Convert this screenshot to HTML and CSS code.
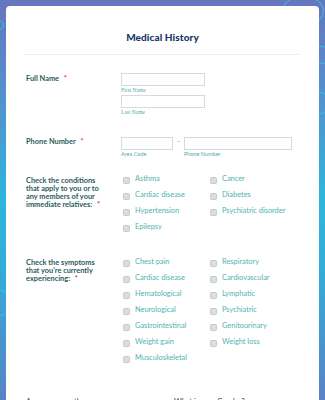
FILE: index.html
```html
<!DOCTYPE html>
<html>
<head>
<meta charset="utf-8">
<link rel="stylesheet" href="styles.css">
</head>
<body>
<div class="deco d1"></div>
<div class="deco d2"></div>
<div class="deco d3"></div>
<div class="deco d4"></div>
<div class="deco d5"></div>
<div class="card">
  <h1 class="title">Medical History</h1>
  <div class="divider"></div>

  <div class="row row-name">
    <div class="label">Full Name <span class="req">*</span></div>
    <div class="field">
      <div class="input name-input"></div>
      <div class="sub">First Name</div>
      <div class="input name-input"></div>
      <div class="sub">Last Name</div>
    </div>
  </div>

  <div class="row row-phone">
    <div class="label">Phone Number <span class="req">*</span></div>
    <div class="field phone">
      <div class="phone-part area">
        <div class="input"></div>
        <div class="sub">Area Code</div>
      </div>
      <div class="dash">-</div>
      <div class="phone-part num">
        <div class="input"></div>
        <div class="sub">Phone Number</div>
      </div>
    </div>
  </div>

  <div class="row row-cond">
    <div class="label multi">Check the conditions that apply to you or to any members of your immediate relatives: <span class="req">*</span></div>
    <div class="options">
      <div class="opt"><span class="cb"></span>Asthma</div>
      <div class="opt"><span class="cb"></span>Cancer</div>
      <div class="opt"><span class="cb"></span>Cardiac disease</div>
      <div class="opt"><span class="cb"></span>Diabetes</div>
      <div class="opt"><span class="cb"></span>Hypertension</div>
      <div class="opt"><span class="cb"></span>Psychiatric disorder</div>
      <div class="opt"><span class="cb"></span>Epilepsy</div>
    </div>
  </div>

  <div class="row row-symp">
    <div class="label multi">Check the symptoms that you're currently experiencing: <span class="req">*</span></div>
    <div class="options">
      <div class="opt"><span class="cb"></span>Chest pain</div>
      <div class="opt"><span class="cb"></span>Respiratory</div>
      <div class="opt"><span class="cb"></span>Cardiac disease</div>
      <div class="opt"><span class="cb"></span>Cardiovascular</div>
      <div class="opt"><span class="cb"></span>Hematological</div>
      <div class="opt"><span class="cb"></span>Lymphatic</div>
      <div class="opt"><span class="cb"></span>Neurological</div>
      <div class="opt"><span class="cb"></span>Psychiatric</div>
      <div class="opt"><span class="cb"></span>Gastrointestinal</div>
      <div class="opt"><span class="cb"></span>Genitourinary</div>
      <div class="opt"><span class="cb"></span>Weight gain</div>
      <div class="opt"><span class="cb"></span>Weight loss</div>
      <div class="opt"><span class="cb"></span>Musculoskeletal</div>
    </div>
  </div>

  <div class="row-bottom">
    <div class="label">Are you currently</div>
    <div class="label">What is your Gender?</div>
  </div>
</div>
</body>
</html>
```
FILE: styles.css
```css
html, body {
  margin: 0;
  padding: 0;
}
body {
  width: 325px;
  height: 400px;
  overflow: hidden;
  position: relative;
  background: linear-gradient(180deg, #6676bf 0%, #4f96cf 28%, #2cb6dd 50%, #33acd9 68%, #5a82c4 100%);
  font-family: Lato, "Open Sans", sans-serif;
}
.deco {
  position: absolute;
  border: 1.5px solid #33c3e0;
  border-radius: 50%;
}
.d1 { left: 282px; top: -4px; width: 40px; height: 28px; }
.d2 { left: 314px; top: 46px; width: 14px; height: 16px; }
.d3 { left: 313px; top: 92px; width: 14px; height: 20px; }
.d4 { left: -10px; top: 290px; width: 18px; height: 24px; }
.d5 { left: -6px; top: 20px; width: 8px; height: 8px; }

.card {
  position: relative;
  margin: 6px 0 0 6px;
  width: 313px;
  height: 420px;
  background: #fff;
  border-radius: 4px;
  padding: 24px 19px 0 19px;
  box-sizing: border-box;
}
.title {
  margin: 0;
  font-size: 10px;
  line-height: 14px;
  font-weight: 900;
  color: #17375e;
  text-align: center;
  letter-spacing: 0.1px;
}
.divider {
  margin-top: 10px;
  height: 1px;
  background: #e6eff0;
}
.row {
  display: flex;
  align-items: flex-start;
}
.label {
  width: 96px;
  flex: none;
  padding-left: 1px;
  box-sizing: border-box;
  font-size: 7.4px;
  line-height: 8px;
  font-weight: 700;
  color: #2b5b60;
}
.label.multi {
  padding-right: 20px;
}
.req {
  color: #e0303a;
  margin-left: 3px;
}
.row-name {
  margin-top: 18px;
}
.row-name .label {
  padding-top: 2px;
}
.input {
  height: 11px;
  border: 1px solid #d6dada;
  background: #fff;
  box-sizing: content-box;
}
.name-input {
  width: 82px;
}
.sub {
  font-size: 5.5px;
  line-height: 8px;
  color: #4eaea9;
  font-family: "Liberation Serif", serif;
  height: 9px;
}
.row-phone {
  margin-top: 20px;
}
.row-phone .label {
  padding-top: 1px;
}
.field.phone {
  display: flex;
  align-items: flex-start;
}
.area .input {
  width: 50px;
}
.num .input {
  width: 106px;
}
.phone .sub {
  font-family: Lato, sans-serif;
  font-size: 5.5px;
}
.dash {
  width: 11px;
  text-align: center;
  font-size: 7px;
  line-height: 9px;
  color: #888;
}
.row-cond {
  margin-top: 16px;
}
.row-cond .label {
  padding-top: 2px;
}
.options {
  display: grid;
  grid-template-columns: 87px 90px;
  grid-auto-rows: 16px;
  padding-left: 2px;
}
.opt {
  display: flex;
  align-items: center;
  height: 8px;
  font-size: 7.4px;
  line-height: 8px;
  color: #4fb3b0;
  white-space: nowrap;
}
.cb {
  width: 5px;
  height: 5px;
  border: 1px solid #c7c9c9;
  background: #dcdede;
  border-radius: 1.5px;
  margin-right: 5px;
  margin-top: 2px;
  flex: none;
}
.row-symp {
  margin-top: 19px;
}
.row-symp .label {
  padding-top: 1px;
}
.row-bottom {
  display: flex;
  margin-top: 28px;
}
.row-bottom .label {
  width: 148px;
  font-weight: 500;
  font-size: 7.4px;
}
```
